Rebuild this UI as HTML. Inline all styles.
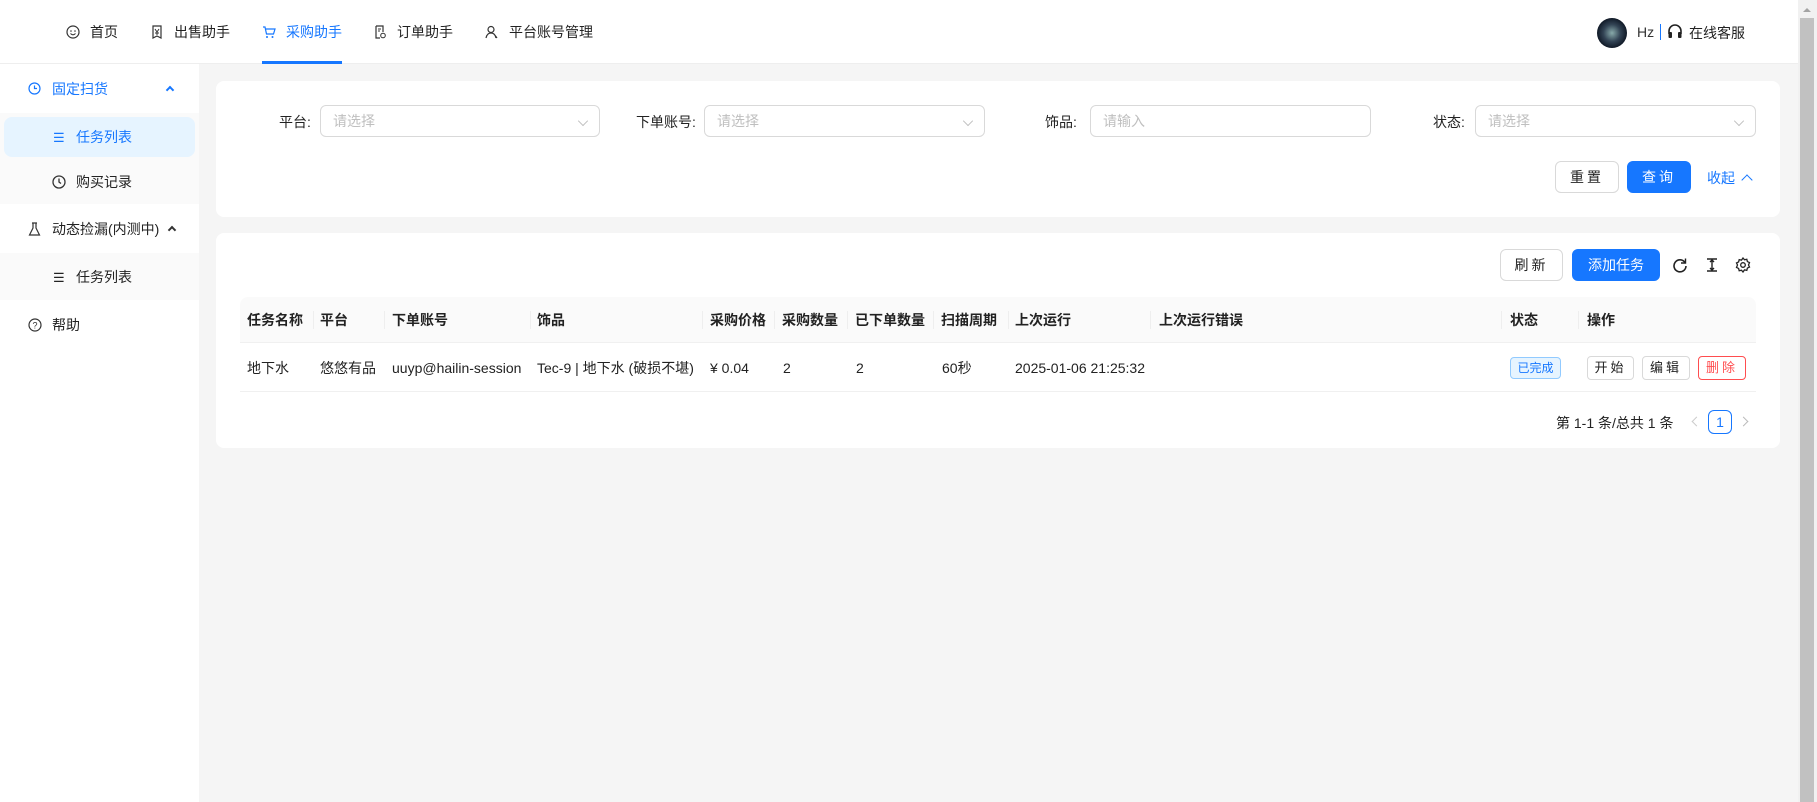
<!DOCTYPE html>
<html><head><meta charset="utf-8"><style>
*{box-sizing:border-box;margin:0;padding:0}
body{width:1817px;height:802px;overflow:hidden;background:#f5f5f5;font-family:"Liberation Sans","Noto Sans CJK SC",sans-serif;font-size:14px;color:#222;position:relative}
.abs{position:absolute}
.hdr{left:0;top:0;width:1798px;height:64px;background:#fff;border-bottom:1px solid #eee}
.nav{top:22px;font-size:14px;color:#222;display:flex;align-items:center;gap:6px}
.nav svg{width:14px;height:14px}
.side{left:0;top:64px;width:199px;height:738px;background:#fff}
.card{background:#fff;border-radius:8px}
.inp{height:32px;border:1px solid #d9d9d9;border-radius:6px;background:#fff;color:#bfbfbf;padding-left:12px;line-height:30px;font-size:14px}
.inp .arr{position:absolute;right:12px;top:11px;width:8px;height:8px;border-right:1px solid #bbb;border-bottom:1px solid #bbb;transform:rotate(45deg) scale(.9)}
.lbl{font-size:14px;color:#222;top:112px}
.btn{height:32px;border-radius:6px;border:1px solid #d9d9d9;background:#fff;text-align:center;line-height:30px;font-size:14px;letter-spacing:3px}
.pri{background:#1677ff;border-color:#1677ff;color:#fff}
.th{top:297px;height:46px;line-height:46px;font-weight:bold;font-size:14px;color:#222}
.td{top:357px;line-height:22px;font-size:14px;color:#222}
.sep{top:311px;width:1px;height:18px;background:#eee}
.sm{height:24px;line-height:22px;border:1px solid #d9d9d9;border-radius:4px;font-size:13px;text-align:center;top:356px;background:#fff;letter-spacing:3px}
</style></head><body>
<div class="abs hdr"></div>
<div class="abs nav" style="left:66px"><svg viewBox="0 0 14 14"><circle cx="7" cy="7" r="6" fill="none" stroke="#333" stroke-width="1.2"/><circle cx="5" cy="6" r=".8" fill="#333"/><circle cx="9" cy="6" r=".8" fill="#333"/><path d="M4.5 8.5q2.5 2.5 5 0" stroke="#333" fill="none" stroke-width="1.1"/></svg><span style="margin-left:4px">首页</span></div>
<div class="abs nav" style="left:150px"><svg viewBox="0 0 14 14"><path d="M3 1h8v12l-4-2-4 2z" fill="none" stroke="#333" stroke-width="1.2"/><path d="M5 4l2 3 2-3M7 7v3M5 8h4" stroke="#333" fill="none"/></svg><span style="margin-left:4px">出售助手</span></div>
<div class="abs nav" style="left:262px;color:#1677ff"><svg viewBox="0 0 14 14"><path d="M1 2h2l1.5 7h7l1.5-5H4" fill="none" stroke="#1677ff" stroke-width="1.2"/><circle cx="5" cy="12" r="1" fill="#1677ff"/><circle cx="10.5" cy="12" r="1" fill="#1677ff"/></svg><span style="margin-left:4px">采购助手</span></div>
<div class="abs" style="left:262px;top:61px;width:80px;height:3px;background:#1677ff"></div>
<div class="abs nav" style="left:373px"><svg viewBox="0 0 14 14"><path d="M3 1h7v6M3 1v12h4" fill="none" stroke="#333" stroke-width="1.2"/><circle cx="10" cy="10.5" r="2.3" fill="none" stroke="#333"/><path d="M5 4h3M5 6h2" stroke="#333"/></svg><span style="margin-left:4px">订单助手</span></div>
<div class="abs nav" style="left:485px"><svg viewBox="0 0 14 14"><circle cx="6" cy="4.5" r="3" fill="none" stroke="#333" stroke-width="1.2"/><path d="M1 13q1-5 5-5t5 5M9 9l3 4" fill="none" stroke="#333" stroke-width="1.2"/></svg><span style="margin-left:4px">平台账号管理</span></div>
<div class="abs" style="left:1597px;top:18px;width:30px;height:30px;border-radius:50%;background:radial-gradient(circle at 50% 50%,#8aa 0,#345 40%,#0b1320 75%)"></div>
<div class="abs" style="left:1637px;top:24px;font-size:14px;color:#333">Hz</div>
<div class="abs" style="left:1660px;top:24px;width:1px;height:16px;background:#1677ff"></div>
<svg class="abs" style="left:1667px;top:23px" width="16" height="16" viewBox="0 0 16 16"><path d="M2 11V8a6 6 0 0 1 12 0v3" fill="none" stroke="#222" stroke-width="1.6"/><rect x="1.5" y="9" width="3.5" height="6" rx="1" fill="#222"/><rect x="11" y="9" width="3.5" height="6" rx="1" fill="#222"/></svg>
<div class="abs" style="left:1689px;top:23px;font-size:14px;color:#222">在线客服</div>

<div class="abs side"></div>
<div class="abs" style="left:0;top:113px;width:199px;height:91px;background:#fafafa"></div>
<div class="abs" style="left:0;top:253px;width:199px;height:47px;background:#fafafa"></div>
<div class="abs" style="left:4px;top:117px;width:191px;height:40px;background:#e6f4ff;border-radius:8px"></div>
<svg class="abs" style="left:28px;top:82px" width="13" height="13" viewBox="0 0 13 13"><circle cx="6.5" cy="6.5" r="5.5" fill="none" stroke="#1677ff" stroke-width="1.2"/><path d="M6.5 3.5v3h2.5" fill="none" stroke="#1677ff" stroke-width="1.2"/></svg>
<div class="abs" style="left:52px;top:79px;color:#1677ff">固定扫货</div>
<div class="abs" style="left:167px;top:87px;width:6px;height:6px;border-left:2px solid #1677ff;border-top:2px solid #1677ff;transform:rotate(45deg)"></div>
<div class="abs" style="left:53px;top:130px;color:#1677ff;font-size:13px">☰</div>
<div class="abs" style="left:76px;top:127px;color:#1677ff">任务列表</div>
<svg class="abs" style="left:52px;top:175px" width="14" height="14" viewBox="0 0 14 14"><circle cx="7" cy="7" r="6" fill="none" stroke="#333" stroke-width="1.3"/><path d="M7 3.5V7l2 1.5" fill="none" stroke="#333" stroke-width="1.3"/></svg>
<div class="abs" style="left:76px;top:172px">购买记录</div>
<svg class="abs" style="left:28px;top:222px" width="13" height="14" viewBox="0 0 13 14"><path d="M4 1h5M5 1v5L1.5 13h10L8 6V1" fill="none" stroke="#333" stroke-width="1.2"/></svg>
<div class="abs" style="left:52px;top:219px">动态捡漏(内测中)</div>
<div class="abs" style="left:169px;top:227px;width:6px;height:6px;border-left:2px solid #333;border-top:2px solid #333;transform:rotate(45deg)"></div>
<div class="abs" style="left:53px;top:270px;font-size:13px">☰</div>
<div class="abs" style="left:76px;top:267px">任务列表</div>
<svg class="abs" style="left:28px;top:318px" width="14" height="14" viewBox="0 0 14 14"><circle cx="7" cy="7" r="6" fill="none" stroke="#333" stroke-width="1.2"/><text x="7" y="10.5" font-size="9" text-anchor="middle" fill="#333" font-family="Liberation Sans">?</text></svg>
<div class="abs" style="left:52px;top:315px">帮助</div>

<div class="abs card" style="left:216px;top:81px;width:1564px;height:136px"></div>
<div class="abs lbl" style="left:279px">平台:</div>
<div class="abs inp" style="left:320px;top:105px;width:280px">请选择<span class="arr"></span></div>
<div class="abs lbl" style="left:636px">下单账号:</div>
<div class="abs inp" style="left:704px;top:105px;width:281px">请选择<span class="arr"></span></div>
<div class="abs lbl" style="left:1045px">饰品:</div>
<div class="abs inp" style="left:1090px;top:105px;width:281px">请输入</div>
<div class="abs lbl" style="left:1433px">状态:</div>
<div class="abs inp" style="left:1475px;top:105px;width:281px">请选择<span class="arr"></span></div>
<div class="abs btn" style="left:1555px;top:161px;width:64px">重置</div>
<div class="abs btn pri" style="left:1627px;top:161px;width:64px">查询</div>
<div class="abs" style="left:1707px;top:168px;color:#1677ff">收起</div>
<div class="abs" style="left:1743px;top:176px;width:8px;height:8px;border-left:1.5px solid #1677ff;border-top:1.5px solid #1677ff;transform:rotate(45deg)"></div>

<div class="abs card" style="left:216px;top:233px;width:1564px;height:215px"></div>
<div class="abs btn" style="left:1500px;top:249px;width:63px">刷新</div>
<div class="abs btn pri" style="left:1572px;top:249px;width:88px;letter-spacing:0">添加任务</div>
<svg class="abs" style="left:1672px;top:257px" width="16" height="16" viewBox="0 0 16 16"><path d="M13 5.5A6 6 0 1 0 14 9" fill="none" stroke="#222" stroke-width="1.6"/><path d="M13.5 1.5v4.5H9" fill="none" stroke="#222" stroke-width="1.4"/></svg>
<svg class="abs" style="left:1704px;top:257px" width="16" height="16" viewBox="0 0 16 16"><path d="M3 2h10M3 14h10M8 3v10M6 5l2-2 2 2M6 11l2 2 2-2" fill="none" stroke="#222" stroke-width="1.4"/></svg>
<svg class="abs" style="left:1735px;top:257px" width="16" height="16" viewBox="0 0 16 16"><path d="M8 1l1.5 1.8 2.3-.5.6 2.3 2.1 1L13.5 8l1 2.1-2.1 1-.6 2.3-2.3-.5L8 15l-1.5-1.8-2.3.5-.6-2.3-2.1-1L2.5 8l-1-2.1 2.1-1 .6-2.3 2.3.5z" fill="none" stroke="#222" stroke-width="1.3"/><circle cx="8" cy="8" r="2.3" fill="none" stroke="#222" stroke-width="1.3"/></svg>

<div class="abs" style="left:240px;top:297px;width:1516px;height:46px;background:#fafafa;border-bottom:1px solid #f0f0f0;border-radius:8px 8px 0 0"></div>
<div class="abs sep" style="left:313px"></div><div class="abs sep" style="left:384px"></div><div class="abs sep" style="left:530px"></div><div class="abs sep" style="left:702px"></div><div class="abs sep" style="left:774px"></div><div class="abs sep" style="left:847px"></div><div class="abs sep" style="left:933px"></div><div class="abs sep" style="left:1008px"></div><div class="abs sep" style="left:1150px"></div><div class="abs sep" style="left:1501px"></div><div class="abs sep" style="left:1578px"></div>
<div class="abs th" style="left:247px">任务名称</div>
<div class="abs th" style="left:320px">平台</div>
<div class="abs th" style="left:392px">下单账号</div>
<div class="abs th" style="left:537px">饰品</div>
<div class="abs th" style="left:710px">采购价格</div>
<div class="abs th" style="left:782px">采购数量</div>
<div class="abs th" style="left:855px">已下单数量</div>
<div class="abs th" style="left:941px">扫描周期</div>
<div class="abs th" style="left:1015px">上次运行</div>
<div class="abs th" style="left:1159px">上次运行错误</div>
<div class="abs th" style="left:1510px">状态</div>
<div class="abs th" style="left:1587px">操作</div>
<div class="abs" style="left:240px;top:391px;width:1516px;height:1px;background:#f0f0f0"></div>
<div class="abs td" style="left:247px">地下水</div>
<div class="abs td" style="left:320px">悠悠有品</div>
<div class="abs td" style="left:392px">uuyp@hailin-session</div>
<div class="abs td" style="left:537px">Tec-9 | 地下水 (破损不堪)</div>
<div class="abs td" style="left:710px">¥ 0.04</div>
<div class="abs td" style="left:783px">2</div>
<div class="abs td" style="left:856px">2</div>
<div class="abs td" style="left:942px">60秒</div>
<div class="abs td" style="left:1015px">2025-01-06 21:25:32</div>
<div class="abs" style="left:1510px;top:357px;width:51px;height:22px;line-height:20px;border:1px solid #91caff;background:#e6f4ff;color:#1677ff;border-radius:4px;font-size:12px;text-align:center">已完成</div>
<div class="abs sm" style="left:1587px;width:47px">开始</div>
<div class="abs sm" style="left:1642px;width:48px">编辑</div>
<div class="abs sm" style="left:1698px;width:48px;color:#ff4d4f;border-color:#ff4d4f">删除</div>

<div class="abs" style="left:1556px;top:413px;font-size:14px">第 1-1 条/总共 1 条</div>
<div class="abs" style="left:1693px;top:418px;width:7px;height:7px;border-left:1.2px solid #ccc;border-bottom:1.2px solid #ccc;transform:rotate(45deg)"></div>
<div class="abs" style="left:1708px;top:410px;width:24px;height:24px;border:1px solid #1677ff;border-radius:6px;color:#1677ff;text-align:center;line-height:22px;font-size:14px">1</div>
<div class="abs" style="left:1740px;top:418px;width:7px;height:7px;border-right:1.2px solid #bbb;border-top:1.2px solid #bbb;transform:rotate(45deg)"></div>

<div class="abs" style="left:1798px;top:0;width:19px;height:802px;background:#f1f1f1"></div>
<div class="abs" style="left:1800px;top:18px;width:14px;height:784px;background:#c1c1c1"></div>
<div class="abs" style="left:1803px;top:8px;width:0;height:0;border-left:4px solid transparent;border-right:4px solid transparent;border-bottom:4px solid #a3a3a3"></div>
</body></html>
